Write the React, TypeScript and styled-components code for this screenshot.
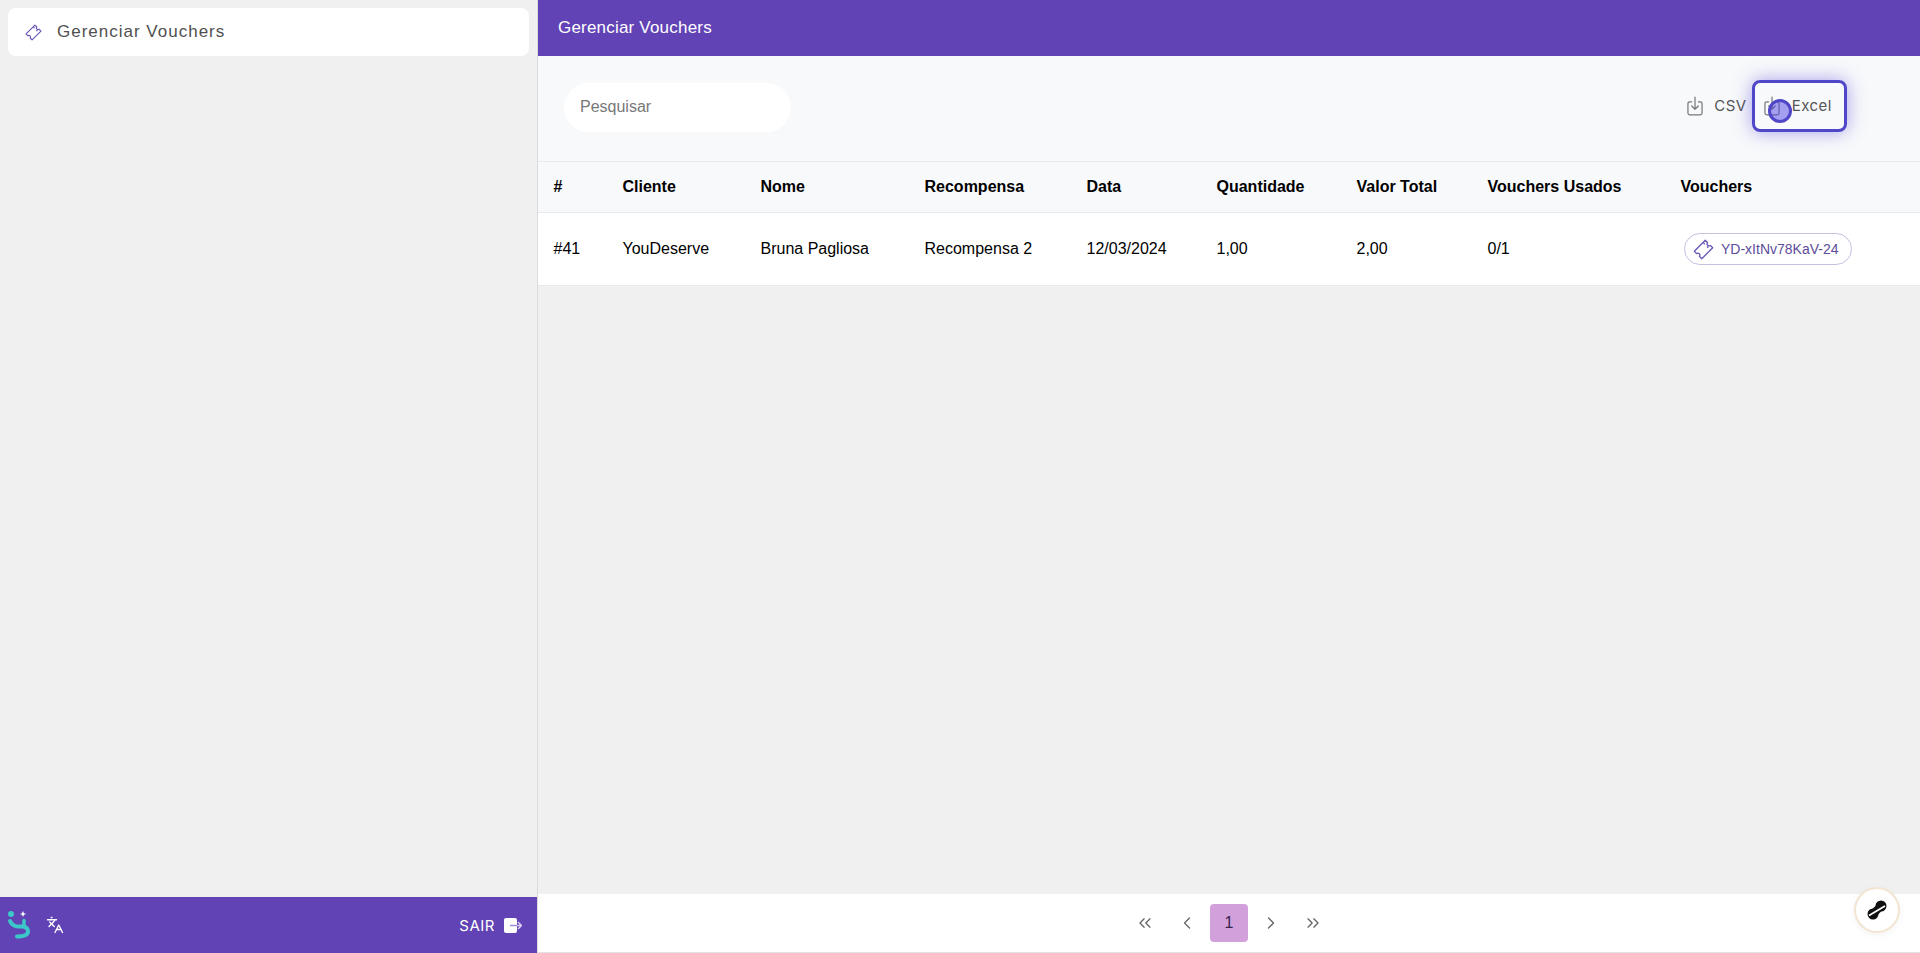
import React from "react";
import styled, { createGlobalStyle } from "styled-components";
import { ChevronLeft, ChevronRight, ChevronsLeft, ChevronsRight, Languages } from "lucide-react";

const GlobalStyle = createGlobalStyle`
  html, body { margin: 0; height: 100%; }
  body { background: #f0f0f0; font-family: "Liberation Sans", Arial, sans-serif; color: #000; overflow: hidden; }
  * { box-sizing: border-box; }
`;

const Page = styled.div`
  display: flex;
  width: 1920px;
  height: 953px;
`;

const Sidebar = styled.aside`
  width: 538px;
  flex: none;
  display: flex;
  flex-direction: column;
  border-right: 1px solid #dcdcdc;
`;

const SideNav = styled.nav`
  flex: 1;
  padding: 8px 8px 0;
`;

const SideItem = styled.a`
  display: flex;
  align-items: center;
  gap: 15px;
  height: 48px;
  padding-left: 17px;
  background: #fff;
  border-radius: 8px;
  font-size: 17px;
  letter-spacing: 1px;
  color: #4f4f4f;
`;

const TicketGlyph = styled.svg<{ $size: number }>`
  flex: none;
  width: ${(p) => p.$size}px;
  height: ${(p) => p.$size}px;
  color: #6a55b5;
`;

const SideFooter = styled.footer`
  height: 56px;
  display: flex;
  align-items: center;
  padding: 0 15px 0 7px;
  background: #6243b5;
  color: #fff;
`;

const Lang = styled(Languages)`
  width: 18px;
  height: 18px;
  margin-left: 15px;
  stroke-width: 1.8;
`;

const Logout = styled.a`
  margin-left: auto;
  display: flex;
  align-items: center;
  gap: 9px;
  font-family: Inter, sans-serif;
  font-size: 15px;
  letter-spacing: 0.5px;
`;

const Main = styled.main`
  flex: 1;
  display: flex;
  flex-direction: column;
  min-width: 0;
`;

const TitleBar = styled.header`
  height: 56px;
  display: flex;
  align-items: center;
  padding: 0 0 1px 20px;
  background: #6243b5;
  color: #fff;
  font-size: 17px;
  letter-spacing: 0.2px;
`;

const Toolbar = styled.div`
  height: 106px;
  display: flex;
  align-items: center;
  padding: 0 73px 3px 26px;
  background: #f8f9fb;
  border-bottom: 1px solid #e8e9ec;
`;

const Search = styled.input`
  width: 227px;
  height: 49px;
  padding: 0 16px;
  border: 0;
  border-radius: 25px;
  background: #fff;
  font-family: "Liberation Sans", sans-serif;
  font-size: 16px;
  outline: none;
  &::placeholder { color: #777; }
`;

const Actions = styled.div`
  margin-left: auto;
  margin-bottom: 3px;
  display: flex;
  align-items: center;
`;

const ExportButton = styled.button<{ $focused?: boolean }>`
  position: relative;
  display: flex;
  align-items: center;
  gap: ${(p) => (p.$focused ? "12px" : "11px")};
  height: 52px;
  padding: ${(p) => (p.$focused ? "0 12px 0 9px" : "0 2px 0 8px")};
  background: transparent;
  border: 3px solid ${(p) => (p.$focused ? "#4f46c8" : "transparent")};
  border-radius: 8px;
  box-shadow: ${(p) => (p.$focused ? "0 0 18px rgba(79, 70, 220, 0.5)" : "none")};
  font-family: Inter, sans-serif;
  font-size: 15px;
  letter-spacing: 0.5px;
  color: #555;
`;

const ExportGlyph = styled.svg`
  flex: none;
  width: 16px;
  height: 20px;
  color: #777;
`;

const Cursor = styled.span`
  position: absolute;
  left: 13px;
  top: 16px;
  width: 24px;
  height: 24px;
  border-radius: 50%;
  border: 3px solid #4f46c8;
  background: rgba(79, 70, 229, 0.5);
`;

const Row = styled.div<{ $head?: boolean }>`
  display: grid;
  grid-template-columns: 69px 138px 164px 162px 130px 140px 131px 193px 1fr;
  align-items: center;
  height: ${(p) => (p.$head ? "51px" : "73px")};
  padding-left: 15.5px;
  background: ${(p) => (p.$head ? "#f8f9fb" : "#fff")};
  border-bottom: 1px solid #e8e9ec;
  font-size: 16px;
  font-weight: ${(p) => (p.$head ? 700 : 400)};
`;

const Chip = styled.span`
  display: inline-flex;
  align-items: center;
  gap: 7px;
  width: 168px;
  height: 32px;
  margin-left: 3.5px;
  padding-left: 8px;
  border: 1px solid #c6c1df;
  border-radius: 16px;
  font-size: 14px;
  color: #5c4d9c;
`;

const Spacer = styled.div`
  flex: 1;
`;

const Pager = styled.div`
  height: 59px;
  display: flex;
  align-items: center;
  justify-content: center;
  gap: 4px;
  background: #fff;
  border-bottom: 1px solid #e2e2e2;
`;

const PageButton = styled.button<{ $active?: boolean }>`
  width: 38px;
  height: 38px;
  display: flex;
  align-items: center;
  justify-content: center;
  padding: 0;
  border: 0;
  border-radius: 4px;
  background: ${(p) => (p.$active ? "#d2a1db" : "transparent")};
  color: ${(p) => (p.$active ? "#3a2350" : "#666")};
  font-family: "Liberation Sans", sans-serif;
  font-size: 16px;
  svg { width: 20px; height: 20px; stroke-width: 1.6; }
`;

const FloatButton = styled.button`
  position: absolute;
  left: 1856px;
  top: 889px;
  width: 42px;
  height: 42px;
  display: flex;
  align-items: center;
  justify-content: center;
  padding: 0;
  border: 0;
  border-radius: 50%;
  background: #fff;
  box-shadow: 0 0 0 2px #f2e5d2, 0 2px 10px rgba(0, 0, 0, 0.08);
`;

const headers = ["#", "Cliente", "Nome", "Recompensa", "Data", "Quantidade", "Valor Total", "Vouchers Usados", "Vouchers"];
const cells = ["#41", "YouDeserve", "Bruna Pagliosa", "Recompensa 2", "12/03/2024", "1,00", "2,00", "0/1"];

const TicketIcon = ({ size, weight }: { size: number; weight: number }) => (
  <TicketGlyph $size={size} viewBox="0 0 24 24" fill="none" stroke="currentColor" strokeWidth={weight} strokeLinejoin="round">
    <path d="M14 1.500L16.700 4.200A2.200 2.200 0 0 0 19.800 7.300L22.500 10L10 22.500L7.300 19.800A2.200 2.200 0 0 0 4.200 16.700L1.500 14Z" />
    <path d="M12 4.500l1.500 1.500M16 8.500l1.500 1.500" />
  </TicketGlyph>
);

const ExportIcon = () => (
  <ExportGlyph viewBox="0 0 17 21" fill="none" stroke="currentColor" strokeWidth="1.300" strokeLinecap="round" strokeLinejoin="round">
    <path d="M5 6H3a2 2 0 0 0-2 2v10a2 2 0 0 0 2 2h11a2 2 0 0 0 2-2V8a2 2 0 0 0-2-2h-2" />
    <path d="M8.500 1v13M5 10.500l3.500 3.500 3.500-3.500" />
  </ExportGlyph>
);

const Logo = () => (
  <svg width="24" height="28" viewBox="0 0 24 28" fill="none">
    <circle cx="4" cy="3" r="3" fill="#3cc8c8" />
    <path d="M16 0l1 2.200 2.200.8-2.200.8-1 2.200-1-2.200-2.200-.8 2.200-.8z" fill="#fff" />
    <path
      d="M3 10c1.500 4 6 6 10 5.500 5-.5 8 1.500 8 5s-3 5-11 5"
      stroke="#3cc8c8"
      strokeWidth="4"
      strokeLinecap="round"
    />
    <path d="M17 9.500v5" stroke="#3cc8c8" strokeWidth="3.500" strokeLinecap="round" />
  </svg>
);

const LogoutIcon = () => (
  <svg width="18" height="15" viewBox="0 0 18 15" fill="none">
    <rect x="0" y="0" width="13" height="15" rx="2" fill="#fff" />
    <path d="M6 7.500h7" stroke="#9c8ad6" strokeWidth="1.500" />
    <path d="M13 7.500h4M14 4l3.500 3.500L14 11" stroke="#d8cff0" strokeWidth="1.500" />
  </svg>
);

const PeanutIcon = () => (
  <svg width="20" height="20" viewBox="0 0 20 20">
    <circle cx="6" cy="14" r="5.500" fill="#111" />
    <circle cx="14" cy="6" r="5.500" fill="#111" />
    <path d="M6 14L14 6" stroke="#111" strokeWidth="8" />
    <path d="M2 15.500L18 6" stroke="#fff" strokeWidth="1.700" />
  </svg>
);

export default function App() {
  return (
    <Page>
      <GlobalStyle />
      <Sidebar>
        <SideNav>
          <SideItem>
            <TicketIcon size={17} weight={1.6} />
            Gerenciar Vouchers
          </SideItem>
        </SideNav>
        <SideFooter>
          <Logo />
          <Lang />
          <Logout>
            SAIR
            <LogoutIcon />
          </Logout>
        </SideFooter>
      </Sidebar>
      <Main>
        <TitleBar>Gerenciar Vouchers</TitleBar>
        <Toolbar>
          <Search placeholder="Pesquisar" />
          <Actions>
            <ExportButton>
              <ExportIcon />
              CSV
            </ExportButton>
            <ExportButton $focused>
              <ExportIcon />
              Excel
              <Cursor />
            </ExportButton>
          </Actions>
        </Toolbar>
        <Row $head>
          {headers.map((h) => (
            <span key={h}>{h}</span>
          ))}
        </Row>
        <Row>
          {cells.map((c) => (
            <span key={c}>{c}</span>
          ))}
          <span>
            <Chip>
              <TicketIcon size={21} weight={1.5} />
              YD-xItNv78KaV-24
            </Chip>
          </span>
        </Row>
        <Spacer />
        <Pager>
          <PageButton><ChevronsLeft /></PageButton>
          <PageButton><ChevronLeft /></PageButton>
          <PageButton $active>1</PageButton>
          <PageButton><ChevronRight /></PageButton>
          <PageButton><ChevronsRight /></PageButton>
        </Pager>
      </Main>
      <FloatButton>
        <PeanutIcon />
      </FloatButton>
    </Page>
  );
}
